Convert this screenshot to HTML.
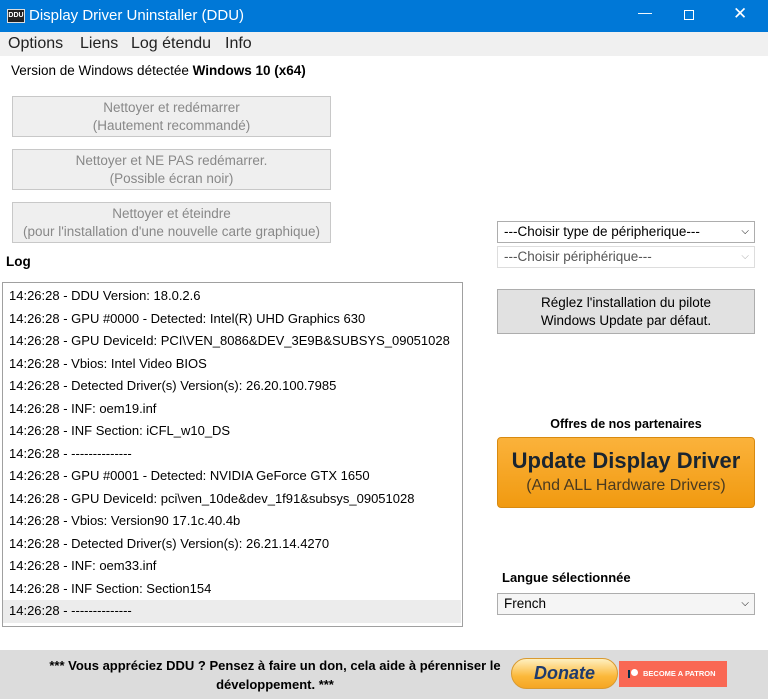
<!DOCTYPE html>
<html><head><meta charset="utf-8"><style>
*{margin:0;padding:0;box-sizing:border-box}
body{width:768px;height:699px;position:relative;overflow:hidden;background:#fff;font-family:"Liberation Sans",sans-serif;color:#000}
.a{position:absolute}
.title{left:0;top:0;width:768px;height:32px;background:#0078d7;color:#fff;font-size:15px}
.menu{left:0;top:32px;width:768px;height:24px;background:#f0f0f0;font-size:16px;color:#222}
.btn{position:absolute;left:12px;width:319px;height:41px;background:#efefef;border:1px solid #c8c8c8;color:#888;font-size:13.5px;text-align:center;line-height:18px;padding-top:2px}
.log{left:2px;top:282px;width:461px;height:345px;border:1px solid #a0a0a0;font-size:13px;overflow:hidden}
.log div{height:22.5px;line-height:22.5px;padding-left:6px;white-space:nowrap}
.sel{position:absolute;left:497px;width:258px;height:22px;border:1px solid #adadad;font-size:13.5px;line-height:20px;padding-left:6px}
</style></head><body>
<div class="a title">
 <div class="a" style="left:7px;top:9px;width:18px;height:14px;background:#222;border:1px solid #ddd;font-size:7px;font-weight:bold;line-height:12px;text-align:center">DDU</div>
 <div class="a" style="left:29px;top:7px">Display Driver Uninstaller (DDU)</div>
 <div class="a" style="left:638px;top:4px;font-size:14px">—</div>
 <div class="a" style="left:684px;top:10px;width:10px;height:10px;border:1px solid #fff"></div>
 <div class="a" style="left:733px;top:4px;font-size:17px">✕</div>
</div>
<div class="a menu"><span class="a" style="left:8px;top:3px">Options</span><span class="a" style="left:80px;top:3px">Liens</span><span class="a" style="left:131px;top:3px">Log étendu</span><span class="a" style="left:225px;top:3px">Info</span></div>
<div class="a" style="left:11px;top:63px;font-size:13.5px">Version de Windows détectée <b>Windows 10 (x64)</b></div>
<div class="btn" style="top:96px">Nettoyer et redémarrer<br>(Hautement recommandé)</div>
<div class="btn" style="top:149px">Nettoyer et NE PAS redémarrer.<br>(Possible écran noir)</div>
<div class="btn" style="top:202px">Nettoyer et éteindre<br>(pour l'installation d'une nouvelle carte graphique)</div>
<div class="a" style="left:6px;top:254px;font-size:13.5px;font-weight:bold">Log</div>
<div class="a log">
<div style="margin-top:2px">14:26:28 - DDU Version: 18.0.2.6</div>
<div>14:26:28 - GPU #0000 - Detected: Intel(R) UHD Graphics 630</div>
<div>14:26:28 - GPU DeviceId: PCI\VEN_8086&amp;DEV_3E9B&amp;SUBSYS_09051028</div>
<div>14:26:28 - Vbios: Intel Video BIOS</div>
<div>14:26:28 - Detected Driver(s) Version(s): 26.20.100.7985</div>
<div>14:26:28 - INF: oem19.inf</div>
<div>14:26:28 - INF Section: iCFL_w10_DS</div>
<div>14:26:28 - --------------</div>
<div>14:26:28 - GPU #0001 - Detected: NVIDIA GeForce GTX 1650</div>
<div>14:26:28 - GPU DeviceId: pci\ven_10de&amp;dev_1f91&amp;subsys_09051028</div>
<div>14:26:28 - Vbios: Version90 17.1c.40.4b</div>
<div>14:26:28 - Detected Driver(s) Version(s): 26.21.14.4270</div>
<div>14:26:28 - INF: oem33.inf</div>
<div>14:26:28 - INF Section: Section154</div>
<div style="background:#ececec;margin-right:1px">14:26:28 - --------------</div>
</div>
<div class="sel" style="top:221px">---Choisir type de péripherique---<span class="a" style="right:5px;top:0;font-size:10px">⌵</span></div>
<div class="sel" style="top:246px;color:#555;border-color:#ddd">---Choisir périphérique---<span class="a" style="right:5px;top:0;font-size:10px;color:#aaa">⌵</span></div>
<div class="a" style="left:497px;top:289px;width:258px;height:45px;background:#e1e1e1;border:1px solid #adadad;font-size:13.5px;text-align:center;line-height:18px;padding-top:4px">Réglez l'installation du pilote<br>Windows Update par défaut.</div>
<div class="a" style="left:497px;top:417px;width:258px;text-align:center;font-size:12.5px;font-weight:bold">Offres de nos partenaires</div>
<div class="a" style="left:497px;top:437px;width:258px;height:71px;border-radius:4px;background:linear-gradient(#fbb23b,#f19a10);border:1px solid #d88a10;text-align:center;color:#1a2530">
 <div style="font-size:22px;font-weight:bold;margin-top:10px">Update Display Driver</div>
 <div style="font-size:16px;color:#4a3a20;margin-top:3px">(And ALL Hardware Drivers)</div>
</div>
<div class="a" style="left:502px;top:570px;font-size:13px;font-weight:bold">Langue sélectionnée</div>
<div class="sel" style="top:593px;background:#f5f5f5">French<span class="a" style="right:5px;top:0;font-size:10px">⌵</span></div>
<div class="a" style="left:0;top:650px;width:768px;height:49px;background:#dcdcdc"></div>
<div class="a" style="left:30px;top:656px;width:490px;text-align:center;font-size:13px;font-weight:bold;line-height:19px">*** Vous appréciez DDU ? Pensez à faire un don, cela aide à pérenniser le développement. ***</div>
<div class="a" style="left:511px;top:658px;width:107px;height:31px;border-radius:16px;background:linear-gradient(#fff0c0,#fbb83a 60%,#f5a623);border:1px solid #d99a30;text-align:center;font-style:italic;font-weight:bold;font-size:18px;color:#1f3b6e;line-height:29px">Donate</div>
<div class="a" style="left:619px;top:661px;width:108px;height:26px;background:#f96854;color:#fff;font-size:7.5px;font-weight:bold;line-height:26px;padding-left:24px">BECOME A PATRON
 <span class="a" style="left:9px;top:9px;width:2px;height:8px;background:#052d49"></span><span class="a" style="left:12px;top:8px;width:7px;height:7px;border-radius:50%;background:#fff"></span></div>
</body></html>
